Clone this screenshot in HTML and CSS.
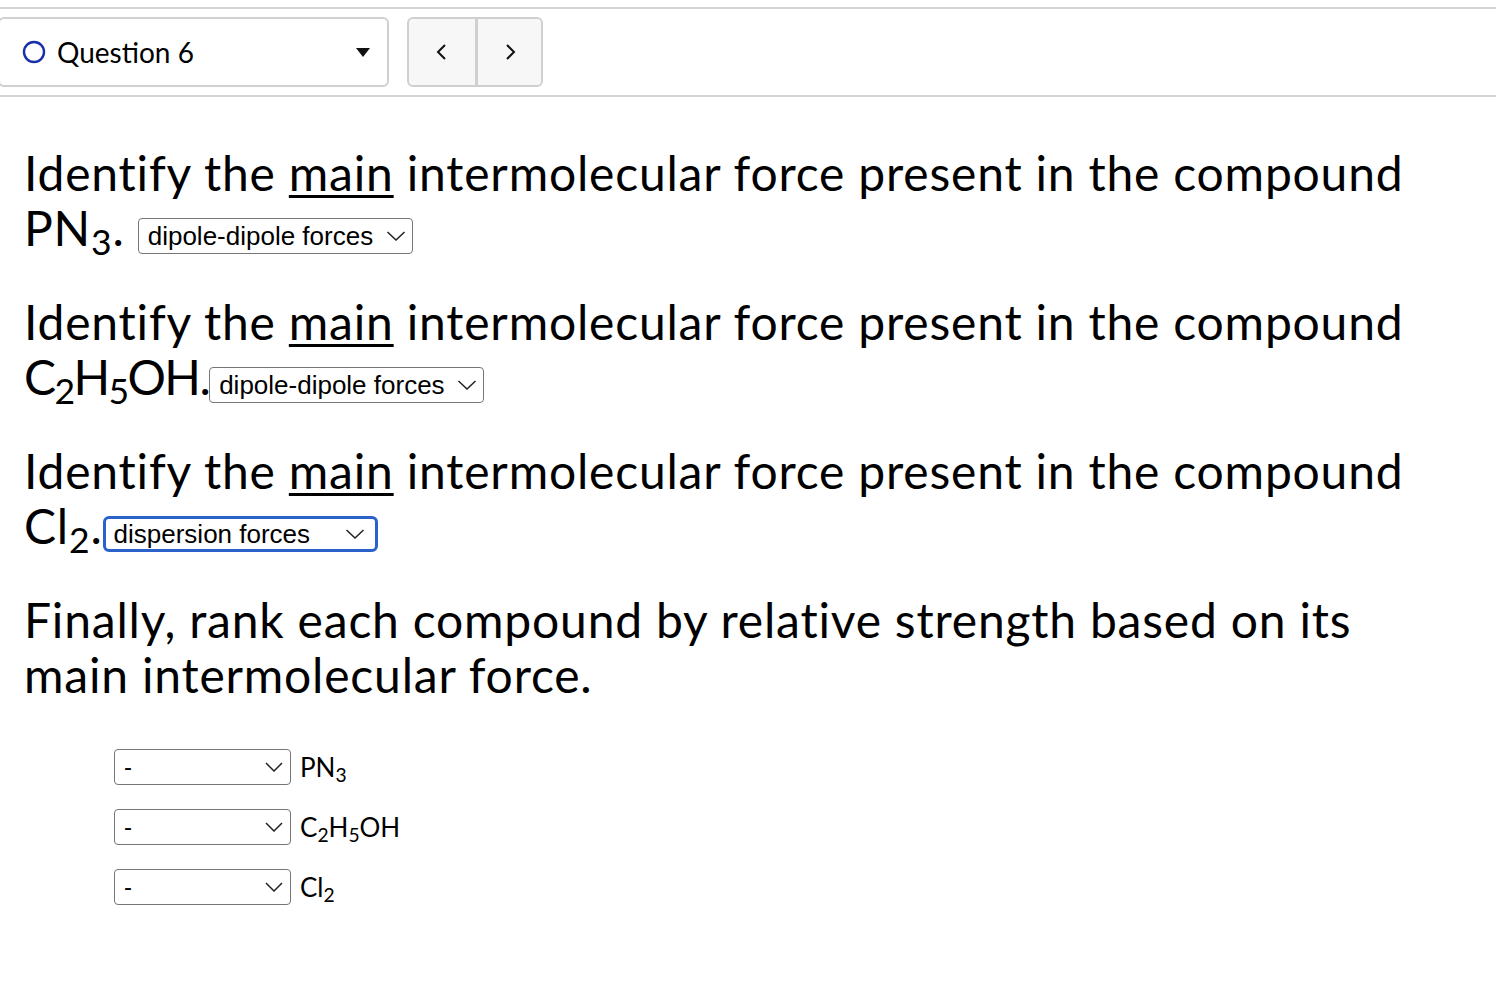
FILE: index.html
```html
<!DOCTYPE html>
<html lang="en">
<head>
  <meta charset="UTF-8">
  <meta name="viewport" content="width=device-width, initial-scale=1.0">
  <title>Question 6</title>
  <link rel="stylesheet" href="styles.css">
</head>
<body>
  <!-- Question Nav -->
  <header class="quiz-nav">
    <div class="question-picker">
      <svg class="status-ring" width="24" height="24" viewBox="0 0 24 24">
        <circle cx="12" cy="12" r="10" fill="none" stroke="#1b2fa8" stroke-width="2.4"/>
      </svg>
      <span class="question-label">Question 6</span>
      <svg class="picker-caret" width="16" height="12" viewBox="0 0 16 12">
        <path d="M1 2 L15 2 L8 11 Z" fill="#111"/>
      </svg>
    </div>
    <div class="pager">
      <button class="pager-btn" type="button">
        <svg width="14" height="20" viewBox="0 0 14 20"><path d="M10 3 L3 10 L10 17" fill="none" stroke="#111" stroke-width="2"/></svg>
      </button>
      <button class="pager-btn" type="button">
        <svg width="14" height="20" viewBox="0 0 14 20"><path d="M4 3 L11 10 L4 17" fill="none" stroke="#111" stroke-width="2"/></svg>
      </button>
    </div>
  </header>

  <main class="question">
    <p class="prompt">
      Identify the <u>main</u> intermolecular force present in the compound
      PN<sub>3</sub>.
      <span class="dropdown answer-select">dipole-dipole forces
        <svg class="chevron" width="20" height="10" viewBox="0 0 20 10"><path d="M1.5 1 L10 9 L18.5 1" fill="none" stroke="#222" stroke-width="1.5"/></svg>
      </span>
    </p>

    <p class="prompt">
      Identify the <u>main</u> intermolecular force present in the compound
      <span class="formula">C<sub>2</sub>H<sub>5</sub>OH.</span><span class="dropdown answer-select">dipole-dipole forces
        <svg class="chevron" width="20" height="10" viewBox="0 0 20 10"><path d="M1.5 1 L10 9 L18.5 1" fill="none" stroke="#222" stroke-width="1.5"/></svg>
      </span>
    </p>

    <p class="prompt">
      Identify the <u>main</u> intermolecular force present in the compound
      Cl<sub>2</sub>.<span class="dropdown answer-select focused">dispersion forces
        <svg class="chevron" width="20" height="10" viewBox="0 0 20 10"><path d="M1.5 1 L10 9 L18.5 1" fill="none" stroke="#222" stroke-width="1.5"/></svg>
      </span>
    </p>

    <p class="prompt">
      Finally, rank each compound by relative strength based on its
      main intermolecular force.
    </p>

    <!-- Ranking -->
    <div class="ranking">
      <div class="rank-row">
        <span class="dropdown rank-select">-
          <svg class="chevron" width="18" height="10" viewBox="0 0 18 10"><path d="M1 1 L9 9 L17 1" fill="none" stroke="#222" stroke-width="1.5"/></svg>
        </span>
        <span class="rank-label">PN<sub>3</sub></span>
      </div>
      <div class="rank-row">
        <span class="dropdown rank-select">-
          <svg class="chevron" width="18" height="10" viewBox="0 0 18 10"><path d="M1 1 L9 9 L17 1" fill="none" stroke="#222" stroke-width="1.5"/></svg>
        </span>
        <span class="rank-label">C<sub>2</sub>H<sub>5</sub>OH</span>
      </div>
      <div class="rank-row">
        <span class="dropdown rank-select">-
          <svg class="chevron" width="18" height="10" viewBox="0 0 18 10"><path d="M1 1 L9 9 L17 1" fill="none" stroke="#222" stroke-width="1.5"/></svg>
        </span>
        <span class="rank-label">Cl<sub>2</sub></span>
      </div>
    </div>
  </main>
</body>
</html>
```

FILE: styles.css
```css
/* Reset */
* {
  margin: 0;
  padding: 0;
  box-sizing: border-box;
}

body {
  font-family: Lato, "Open Sans", sans-serif;
  background-color: #fff;
  color: #000;
}

/* Question Nav */
.quiz-nav {
  display: flex;
  align-items: center;
  gap: 18px;
  margin-top: 7px;
  padding: 8px 0;
  border-top: 2px solid #d4d4d4;
  border-bottom: 2px solid #d4d4d4;
}

.question-picker {
  display: flex;
  align-items: center;
  width: 391px;
  height: 70px;
  margin-left: -2px;
  padding: 0 16px 0 22px;
  border: 2px solid #d0d0d0;
  border-radius: 6px;
}

.status-ring {
  margin-right: 11px;
}

.question-label {
  flex: 1;
  font-size: 28px;
}

.pager {
  display: flex;
  height: 70px;
  border: 2px solid #d0d0d0;
  border-radius: 6px;
  background-color: #f7f7f7;
  overflow: hidden;
}

.pager-btn {
  width: 66px;
  display: flex;
  align-items: center;
  justify-content: center;
  background: none;
  border: none;
}

.pager-btn + .pager-btn {
  border-left: 3px solid #d0d0d0;
}

/* Question */
.question {
  padding: 48px 24px 0;
}

.prompt {
  max-width: 1440px;
  font-size: 48px;
  line-height: 55px;
  letter-spacing: 0.8px;
  margin-bottom: 39px;
}

.prompt u {
  text-decoration-thickness: 3px;
  text-underline-offset: 4px;
}

.formula {
  letter-spacing: -1.6px;
}

sub {
  font-size: 0.74em;
  vertical-align: -0.24em;
  line-height: 0;
}

/* Dropdowns */
.dropdown {
  display: inline-flex;
  align-items: center;
  justify-content: space-between;
  gap: 8px;
  height: 36px;
  padding: 0 6px 0 9px;
  border: 1.5px solid #767676;
  border-radius: 4px;
  background-color: #fff;
  font-family: "Liberation Sans", Arial, sans-serif;
  font-size: 26px;
  letter-spacing: 0;
  line-height: 1;
  vertical-align: 1px;
  white-space: nowrap;
}

.answer-select {
  width: 275px;
}

.answer-select.focused {
  border: 3px solid #2a62c9;
  border-radius: 6px;
  padding-left: 8px;
  padding-right: 10px;
}

.chevron {
  flex-shrink: 0;
}

/* Ranking */
.ranking {
  display: flex;
  flex-direction: column;
  gap: 24px;
  padding-left: 90px;
  margin-top: 47px;
}

.rank-row {
  display: flex;
  align-items: center;
  gap: 9px;
}

.rank-select {
  width: 177px;
  padding-right: 7px;
  font-size: 24px;
  vertical-align: 0;
}

.rank-label {
  font-size: 26px;
}
```
